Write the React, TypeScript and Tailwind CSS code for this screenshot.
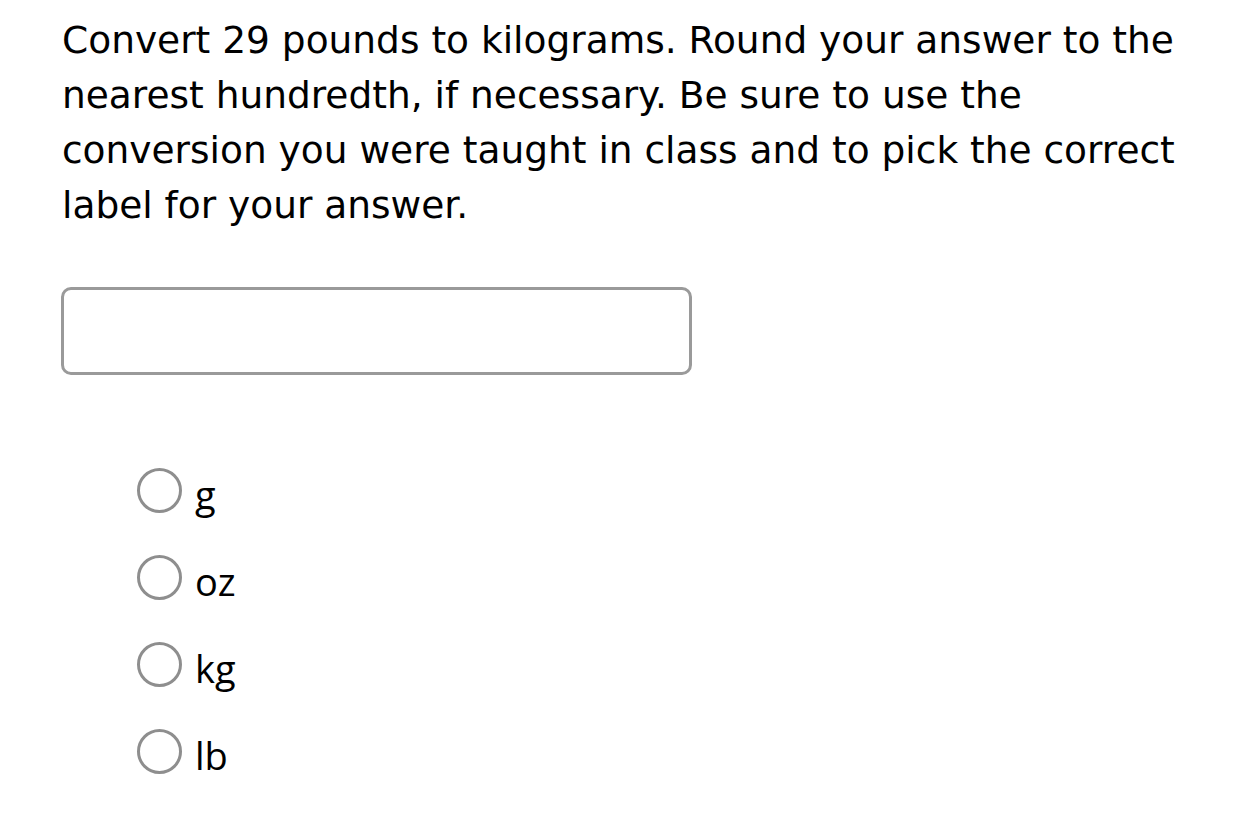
import React from 'react'

const units = ['g', 'oz', 'kg', 'lb']

export default function App() {
  return (
    <div className="min-h-screen bg-white pl-[62px] pt-[13px] text-black">
      {/* Enunciado */}
      <p className="whitespace-nowrap text-[37.5px] leading-[55px] font-['DejaVu_Sans',sans-serif]">
        Convert 29 pounds to kilograms. Round your answer to the
        <br />
        nearest hundredth, if necessary. Be sure to use the
        <br />
        conversion you were taught in class and to pick the correct
        <br />
        label for your answer.
      </p>

      {/* Campo de resposta */}
      <input
        type="text"
        className="mt-[54px] block h-[88px] w-[631px] -ml-px rounded-[10px] border-[3px] border-[#9a9a9a] bg-white outline-none"
      />

      {/* Opções de unidade */}
      <div className="mt-[72px] flex flex-col pl-[75px]">
        {units.map((u) => (
          <label key={u} className="flex h-[87px] cursor-pointer items-center gap-[13px]">
            <span className="size-[45px] shrink-0 rounded-full border-[3.5px] border-[#8e8e8e] bg-white" />
            <span className="translate-y-[3px] text-[38px] leading-none font-['Open_Sans',sans-serif]">
              {u}
            </span>
          </label>
        ))}
      </div>
    </div>
  )
}
